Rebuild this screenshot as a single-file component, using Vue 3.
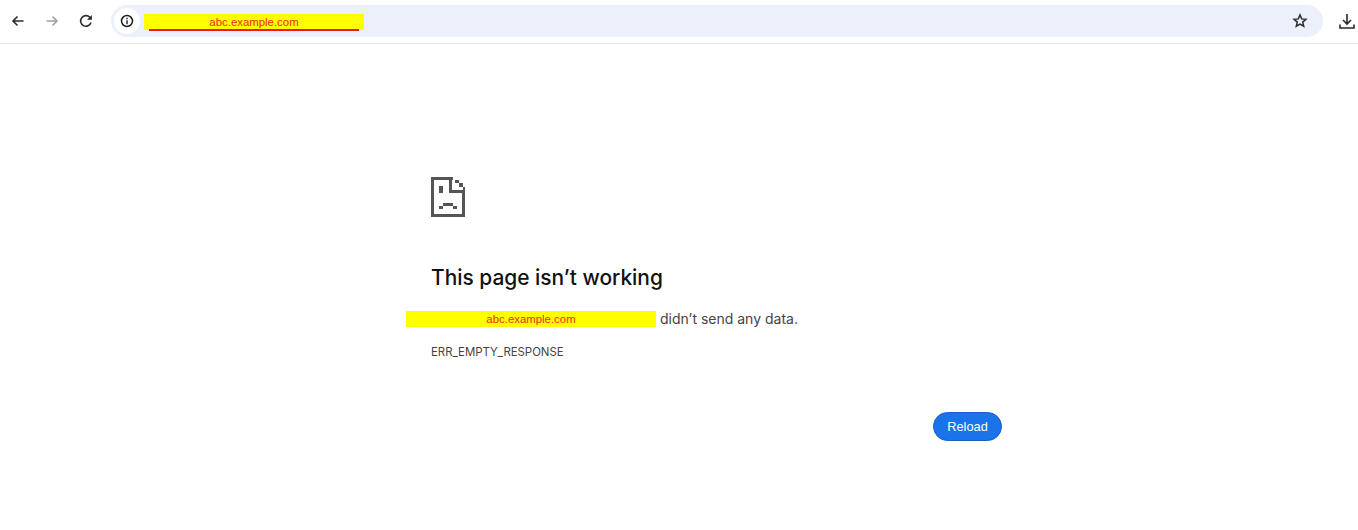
<script setup>
const pixels = [
  'M0 0h22v3H0z','M0 3h3v37H0z','M3 37h31v3H3z','M31 16h3v21h-3z',
  'M18 3h3v10h-3z','M18 13h16v3H18z','M24 3h4v3h-4z','M28 6h4v4h-4z','M32 10h2v3h-2z',
  'M8 9h4v7H8z','M12 26h10v3H12z','M8 29h4v3H8z','M22 29h4v3h-4z'
]
</script>

<template>
  <div class="page">
    <header class="toolbar">
      <nav class="nav">
        <svg class="ico" viewBox="0 0 18 18"><path d="M14.500 9H4M8.500 4.500 4 9l4.500 4.500" fill="none" stroke="#2a2a2a" stroke-width="1.600"/></svg>
        <svg class="ico" viewBox="0 0 18 18"><path d="M3.500 9H14M9.500 4.500 14 9l-4.500 4.500" fill="none" stroke="#a0a0a0" stroke-width="1.600"/></svg>
        <svg class="ico" viewBox="0 0 18 18"><path d="M14 10.500A5.300 5.300 0 1 1 12.800 5.300L14.500 7" fill="none" stroke="#2a2a2a" stroke-width="1.600"/><path d="M14.800 3v4.800H10z" fill="#2a2a2a"/></svg>
      </nav>
      <div class="omnibox">
        <span class="site-chip">
          <svg class="info" viewBox="0 0 14 14"><circle cx="7" cy="7" r="5.500" fill="none" stroke="#1f1f1f" stroke-width="1.500"/><path d="M6.300 6.200h1.400v4H6.300zM6.300 3.800h1.400v1.400H6.300z" fill="#1f1f1f"/></svg>
        </span>
        <span class="url">abc.example.com</span>
        <svg class="star" viewBox="0 0 16 16"><path d="m8 2 1.700 3.900 4.200.4-3.200 2.800 1 4.100L8 11l-3.700 2.200 1-4.100-3.200-2.800 4.200-.4z" fill="none" stroke="#2a2a2a" stroke-width="1.500"/></svg>
      </div>
      <svg class="download" viewBox="0 0 16 16"><path d="M8 1v9.500M4 7l4 4 4-4M1 11.500V15h14v-3.500" fill="none" stroke="#2a2a2a" stroke-width="1.600"/></svg>
    </header>

    <main class="content">
      <svg class="sad" viewBox="0 0 34 40" shape-rendering="crispEdges">
        <path v-for="(d, i) in pixels" :key="i" :d="d" fill="#555"/>
      </svg>
      <h1>This page isn’t working</h1>
      <p class="line"><span class="host">abc.example.com</span><span class="msg">didn’t send any data.</span></p>
      <p class="code">ERR_EMPTY_RESPONSE</p>
      <div class="actions"><button>Reload</button></div>
    </main>
  </div>
</template>

<style>
html, body { margin: 0; background: #fff; }
</style>

<style scoped>
.page { width: 1358px; height: 530px; overflow: hidden; font-family: Inter, "Liberation Sans", sans-serif; }
.toolbar { height: 44px; box-sizing: border-box; border-bottom: 1px solid #e8e6df; display: flex; align-items: flex-start; padding-top: 5px; }
.nav { display: flex; gap: 16px; height: 32px; align-items: center; width: 111px; box-sizing: border-box; padding-left: 8.500px; flex: none; }
.ico { width: 18px; height: 18px; flex: none; }
.omnibox { width: 1212px; height: 32px; background: #ebf0fa; border-radius: 16px; display: flex; align-items: center; flex: none; }
.site-chip { width: 26px; height: 26px; margin-left: 3px; background: #fff; border-radius: 50%; display: flex; align-items: center; justify-content: center; flex: none; }
.info { width: 14px; height: 14px; }
.url { width: 220px; height: 16px; margin: 2px 0 0 4px; background: #ff0; color: #f02c1c; font: 11.400px/17px "Liberation Sans", sans-serif; text-align: center; position: relative; }
.url::after { content: ""; position: absolute; left: 5px; right: 5px; bottom: -1px; height: 2px; background: #f01818; }
.star { width: 16px; height: 16px; margin-left: auto; margin-right: 15px; }
.download { width: 16px; height: 16px; margin: 8px 0 0 16px; flex: none; }
.content { width: 571px; margin: 133px 0 0 431px; }
.sad { display: block; width: 34px; height: 40px; }
h1 { margin: 48px 0 0; font-size: 20.900px; line-height: 26px; font-weight: 500; color: #111; }
.line { margin: 19px 0 0 -25px; display: flex; align-items: flex-start; height: 17px; }
.host { width: 250px; height: 16px; margin-top: 1px; background: #ff0; color: #f02c1c; font: 11.400px/17px "Liberation Sans", sans-serif; text-align: center; }
.msg { margin-left: 4px; font-size: 14px; line-height: 17px; color: #444; }
.code { margin: 18px 0 0; font-size: 11.400px; line-height: 14px; color: #444; }
.actions { display: flex; justify-content: flex-end; margin-top: 53px; }
button { width: 69px; height: 29px; padding: 0; border: 1px solid #1a5fc4; border-radius: 15px; background: #1a73e8; color: #fff; font: 500 12.800px "Liberation Sans", sans-serif; }
</style>
